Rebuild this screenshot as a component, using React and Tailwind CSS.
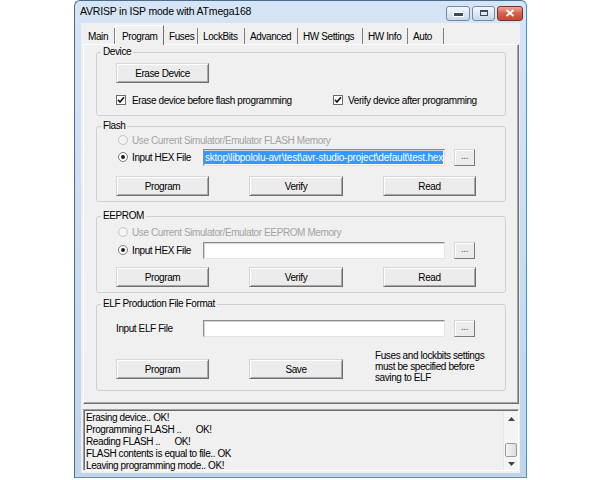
import React from "react";

function Btn({ children, w = "w-[93px]" }) {
  return (
    <div
      className={`${w} h-[20px] shrink-0 flex items-center justify-center bg-[#ececec] border border-t-[#d6d6d6] border-l-[#d6d6d6] border-r-[#6e6e6e] border-b-[#6e6e6e] shadow-[inset_1px_1px_0_#ffffff,inset_-1px_-1px_0_#a8a8a8] text-black`}
    >
      {children}
    </div>
  );
}

function Radio({ checked, disabled }) {
  return (
    <div
      className={`w-[10px] h-[10px] shrink-0 rounded-full border flex items-center justify-center ${
        disabled ? "border-[#c4c4c4] bg-[#f3f3f3]" : "border-[#7a7a7a] bg-white"
      }`}
    >
      {checked && <div className="w-[4px] h-[4px] rounded-full bg-[#1e1e1e]" />}
    </div>
  );
}

function Check() {
  return (
    <div className="w-[10px] h-[10px] shrink-0 border border-[#6a6a6a] bg-white flex items-center justify-center">
      <svg width="8" height="8" viewBox="0 0 8 8">
        <path d="M1 3.8 L3 6 L7 1.3" stroke="#111" strokeWidth="1.6" fill="none" />
      </svg>
    </div>
  );
}

function Field({ children }) {
  return (
    <div className="w-[242px] h-[17px] shrink-0 bg-white border border-t-[#8c8c8c] border-l-[#8c8c8c] border-r-[#e2e2e2] border-b-[#e2e2e2] shadow-[inset_1px_1px_0_#d4d4d4] overflow-hidden flex items-center justify-end pr-[1px]">
      {children}
    </div>
  );
}

function Dots() {
  return (
    <div className="ml-[9px] w-[21px] h-[17px] shrink-0 flex items-start justify-center bg-[#ececec] border border-t-[#d6d6d6] border-l-[#d6d6d6] border-r-[#7a7a7a] border-b-[#7a7a7a] shadow-[inset_1px_1px_0_#ffffff] text-[#555] leading-[12px]">
      ...
    </div>
  );
}

function Group({ label, className = "", children }) {
  return (
    <fieldset className={`ml-[12px] w-[410px] border border-[#cfcfcf] rounded-[3px] ${className}`}>
      <legend className="ml-[4px] px-[2px] leading-[12px] text-black">{label}</legend>
      <div className="pl-[19px]">{children}</div>
    </fieldset>
  );
}

function Tab({ label, w, selected }) {
  if (selected) {
    return (
      <div
        className={`${w} h-[20px] shrink-0 flex items-start pt-[3px] pl-[6px] bg-[#f0f0f0] border-l border-t border-r border-l-white border-t-white border-r-[#6e6e6e] relative top-[1px]`}
      >
        {label}
      </div>
    );
  }
  return (
    <div className={`${w} h-[16px] shrink-0 flex items-center pl-[5px] border-r border-r-[#7e7e7e]`}>
      {label}
    </div>
  );
}

export default function App() {
  return (
    <div className="w-[600px] h-[480px] bg-white overflow-hidden font-['Liberation_Sans',Arial,sans-serif] text-[10px] tracking-[-0.4px] text-black">
      <div className="ml-[74px] w-[453px] h-[478px] flex flex-col border border-l-[#4d6b8e] border-t-[#4d6b8e] border-r-[#3a9ad6] border-b-[#3a9ad6] rounded-t-[6px] bg-gradient-to-b from-[#d6e5f5] to-[#c0d4ec]">
        {/* title bar */}
        <div className="h-[22px] shrink-0 flex items-center justify-between pl-[5px] pr-[3px]">
          <span className="text-[10.5px] tracking-[-0.2px] text-black">AVRISP in ISP mode with ATmega168</span>
          <div className="flex items-center gap-[2px] pt-[2px]">
            <div className="w-[24px] h-[15px] rounded-[3px] border border-[#7089a8] bg-gradient-to-b from-[#f3f7fc] to-[#c9d8ea] flex items-end justify-center pb-[3px]">
              <div className="w-[9px] h-[3px] bg-[#3b4a5c] border border-white box-content" />
            </div>
            <div className="w-[23px] h-[15px] rounded-[3px] border border-[#7089a8] bg-gradient-to-b from-[#f3f7fc] to-[#c9d8ea] flex items-center justify-center">
              <div className="w-[8px] h-[6px] border-[1.5px] border-t-[2.5px] border-[#3b4a5c]" />
            </div>
            <div className="w-[26px] h-[15px] rounded-[3px] border border-[#7a3028] bg-gradient-to-b from-[#eaa896] via-[#d4604c] to-[#c24a36] flex items-center justify-center">
              <svg width="10" height="8" viewBox="0 0 10 8">
                <path d="M1.5 1 L8.5 7 M8.5 1 L1.5 7" stroke="white" strokeWidth="2" />
              </svg>
            </div>
          </div>
        </div>
        <div className="flex flex-1">
          <div className="w-[6px] shrink-0" />
          {/* client */}
          <div className="w-[439px] h-[450px] bg-[#f0f0f0] flex flex-col">
            {/* tabs */}
            <div className="h-[21px] shrink-0 flex items-end pl-[2px]">
              <Tab label="Main" w="w-[32px]" />
              <Tab label="Program" w="w-[49px]" selected />
              <Tab label="Fuses" w="w-[34px]" />
              <Tab label="LockBits" w="w-[47px]" />
              <Tab label="Advanced" w="w-[53px]" />
              <Tab label="HW Settings" w="w-[65px]" />
              <Tab label="HW Info" w="w-[45px]" />
              <Tab label="Auto" w="w-[36px]" />
            </div>
            {/* panel */}
            <div className="ml-[2px] w-[436px] h-[360px] shrink-0 border border-t-white border-l-white border-r-[#6e6e6e] border-b-[#6e6e6e] shadow-[inset_-1px_-1px_0_#a8a8a8]">
              {/* Device */}
              <Group label="Device" className="mt-[1px] pb-[9px]">
                <div className="mt-[5px]">
                  <Btn>Erase Device</Btn>
                </div>
                <div className="mt-[11px] h-[12px] flex items-center">
                  <Check />
                  <span className="ml-[6px] w-[201px] shrink-0">Erase device before flash programming</span>
                  <Check />
                  <span className="ml-[5px]">Verify device after programming</span>
                </div>
              </Group>

              {/* Flash */}
              <Group label="Flash" className="mt-[4px] pb-[5px]">
                <div className="mt-[2px] h-[12px] flex items-center">
                  <div className="ml-[2px]"><Radio disabled /></div>
                  <span className="ml-[4px] text-[#a3a3a3]">Use Current Simulator/Emulator FLASH Memory</span>
                </div>
                <div className="mt-[2px] h-[18px] flex items-center">
                  <div className="ml-[2px]"><Radio checked /></div>
                  <span className="ml-[4px] w-[71px] shrink-0">Input HEX File</span>
                  <Field>
                    <span className="whitespace-nowrap bg-[#3399ff] text-white leading-[13px] pl-[1px] tracking-[-0.2px]">
                      sktop\libpololu-avr\test\avr-studio-project\default\test.hex
                    </span>
                  </Field>
                  <Dots />
                </div>
                <div className="mt-[10px] flex gap-[40px]">
                  <Btn>Program</Btn>
                  <Btn w="w-[94px]">Verify</Btn>
                  <Btn>Read</Btn>
                </div>
              </Group>

              {/* EEPROM */}
              <Group label="EEPROM" className="mt-[8px] pb-[5px]">
                <div className="mt-[4px] h-[12px] flex items-center">
                  <div className="ml-[2px]"><Radio disabled /></div>
                  <span className="ml-[4px] text-[#a3a3a3]">Use Current Simulator/Emulator EEPROM Memory</span>
                </div>
                <div className="mt-[3px] h-[18px] flex items-center">
                  <div className="ml-[2px]"><Radio checked /></div>
                  <span className="ml-[4px] w-[71px] shrink-0">Input HEX File</span>
                  <Field />
                  <Dots />
                </div>
                <div className="mt-[8px] flex gap-[40px]">
                  <Btn>Program</Btn>
                  <Btn w="w-[94px]">Verify</Btn>
                  <Btn>Read</Btn>
                </div>
              </Group>

              {/* ELF */}
              <Group label="ELF Production File Format" className="mt-[5px] pb-[7px]">
                <div className="mt-[9px] h-[18px] flex items-center">
                  <span className="w-[87px] shrink-0">Input ELF File</span>
                  <Field />
                  <Dots />
                </div>
                <div className="mt-[13px] flex items-start">
                  <div className="mt-[9px] flex gap-[40px]">
                    <Btn>Program</Btn>
                    <Btn w="w-[94px]">Save</Btn>
                  </div>
                  <div className="ml-[32px] leading-[11px]">
                    Fuses and lockbits settings
                    <br />
                    must be specified before
                    <br />
                    saving to ELF
                  </div>
                </div>
              </Group>
            </div>

            {/* log */}
            <div className="mt-[5px] ml-[2px] w-[436px] h-[62px] shrink-0 flex border border-t-[#a0a0a0] border-l-[#a0a0a0] border-r-white border-b-white shadow-[inset_1px_1px_0_#6e6e6e]">
              <div className="flex-1 pl-[2px] pt-[2px] leading-[12px]">
                <div>Erasing device.. OK!</div>
                <div>Programming FLASH ..&nbsp;&nbsp;&nbsp;&nbsp;&nbsp;&nbsp;OK!</div>
                <div>Reading FLASH ..&nbsp;&nbsp;&nbsp;&nbsp;&nbsp;&nbsp;OK!</div>
                <div>FLASH contents is equal to file.. OK</div>
                <div>Leaving programming mode.. OK!</div>
              </div>
              <div className="w-[15px] shrink-0 flex flex-col bg-[#f4f4f4] border-l border-[#e6e6e6] mt-[1px]">
                <div className="h-[16px] flex items-center justify-center">
                  <svg width="7" height="4" viewBox="0 0 7 4"><path d="M0 4 L3.5 0 L7 4Z" fill="#444" /></svg>
                </div>
                <div className="flex-1 flex flex-col justify-end">
                  <div className="mx-[1px] h-[14px] rounded-[2px] border border-[#9a9a9a] bg-gradient-to-r from-[#f6f6f6] to-[#dcdcdc]" />
                </div>
                <div className="h-[13px] flex items-center justify-center">
                  <svg width="7" height="4" viewBox="0 0 7 4"><path d="M0 0 L3.5 4 L7 0Z" fill="#444" /></svg>
                </div>
              </div>
            </div>
          </div>
          <div className="w-[6px] shrink-0" />
        </div>
        <div className="h-[4px] shrink-0" />
      </div>
    </div>
  );
}
